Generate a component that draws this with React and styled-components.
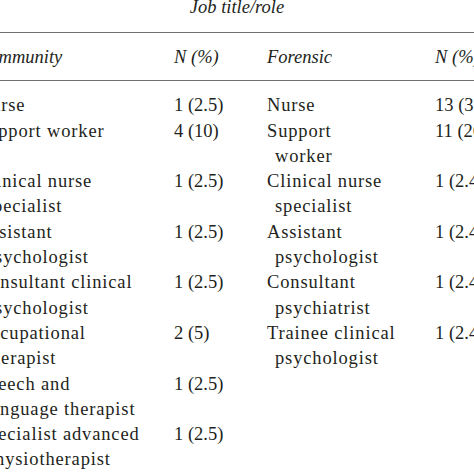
import React from "react"
import styled, { createGlobalStyle } from "styled-components"

const GlobalStyle = createGlobalStyle`
  html, body {
    margin: 0;
    padding: 0;
    background: #fff;
    overflow: hidden;
  }
  body {
    width: 474px;
    height: 474px;
    font-family: "Liberation Serif", "DejaVu Serif", serif;
    color: #231f20;
  }
`

const Frame = styled.div`
  width: 520px;
  margin-left: -23px;
`

const Title = styled.div`
  margin-top: -3px;
  height: 20px;
  line-height: 20px;
  font-size: 18.5px;
  font-style: italic;
  text-align: center;
  margin-bottom: 14.5px;
`

const Table = styled.div`
  border-top: 1.5px solid #6f6f6f;
`

const Grid = styled.div`
  display: grid;
  grid-template-columns: 197px 93px 168px 1fr;
  font-size: 18.5px;
  line-height: 25.3px;
`

const HeadRow = styled(Grid)`
  padding: 12.5px 0 10px;
  border-bottom: 1.5px solid #6f6f6f;
  font-style: italic;
`

const Body = styled.div`
  padding-top: 12px;
`

const Name = styled.div`
  letter-spacing: 0.85px;
  white-space: nowrap;
`

const Line = styled.div`
  padding-left: ${p => (p.$wrap ? "8px" : "0")};
`

const Count = styled.div`
  white-space: nowrap;
`

const rows = [
  [["Nurse"], "1 (2.5)", ["Nurse"], "13 (31.7)"],
  [["Support worker"], "4 (10)", ["Support", "worker"], "11 (26.8)"],
  [["Clinical nurse", "specialist"], "1 (2.5)", ["Clinical nurse", "specialist"], "1 (2.4)"],
  [["Assistant", "psychologist"], "1 (2.5)", ["Assistant", "psychologist"], "1 (2.4)"],
  [["Consultant clinical", "psychologist"], "1 (2.5)", ["Consultant", "psychiatrist"], "1 (2.4)"],
  [["Occupational", "therapist"], "2 (5)", ["Trainee clinical", "psychologist"], "1 (2.4)"],
  [["Speech and", "language therapist"], "1 (2.5)", [], ""],
  [["Specialist advanced", "physiotherapist"], "1 (2.5)", [], ""],
]

function RoleCell({ lines }) {
  return (
    <Name>
      {lines.map((l, i) => (
        <Line key={i} $wrap={i > 0}>{l}</Line>
      ))}
    </Name>
  )
}

export default function App() {
  return (
    <>
      <GlobalStyle />
      <Frame>
        <Title>Job title/role</Title>
        <Table>
          <HeadRow>
            <div>Community</div>
            <div>N (%)</div>
            <div>Forensic</div>
            <div>N (%)</div>
          </HeadRow>
          <Body>
            {rows.map((r, i) => (
              <Grid key={i}>
                <RoleCell lines={r[0]} />
                <Count>{r[1]}</Count>
                <RoleCell lines={r[2]} />
                <Count>{r[3]}</Count>
              </Grid>
            ))}
          </Body>
        </Table>
      </Frame>
    </>
  )
}
